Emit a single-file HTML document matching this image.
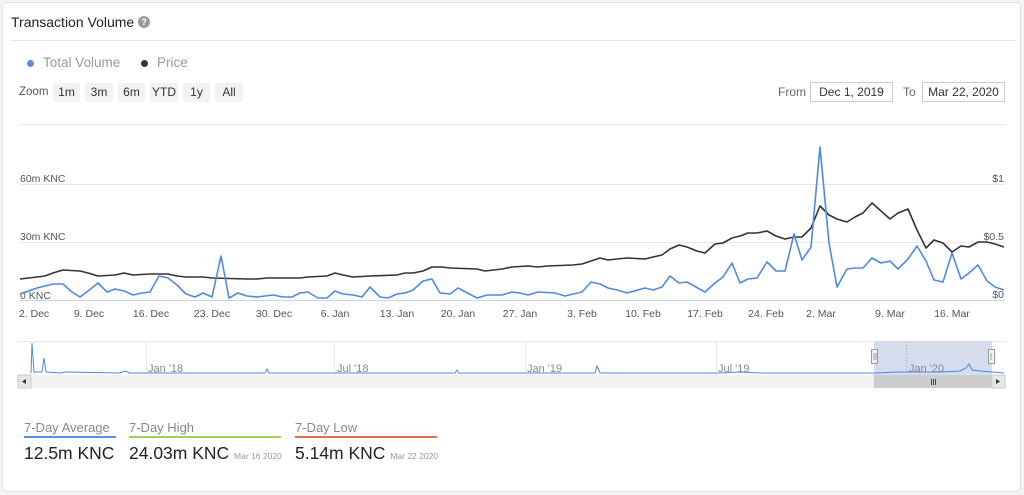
<!DOCTYPE html>
<html><head><meta charset="utf-8"><style>
*{margin:0;padding:0;box-sizing:border-box}
body{width:1024px;height:495px;background:#f4f4f4;font-family:"Liberation Sans",sans-serif;position:relative;overflow:hidden}
.card{position:absolute;left:2px;top:2px;width:1019px;height:490px;background:#fff;border:1px solid #e2e2e2;border-radius:4px}
.abs{position:absolute;white-space:nowrap}
.btn{position:absolute;top:83px;height:19px;background:#f2f2f2;border-radius:2px;font-size:12px;color:#333;text-align:center;line-height:19px}
.inp{position:absolute;top:82px;height:20px;border:1px solid #ccc;font-size:12px;color:#333;text-align:center;line-height:18px;background:#fff}
</style></head><body>
<div class="card"></div>
<div class="abs" style="left:11px;top:14px;font-size:14px;color:#222">Transaction Volume</div>
<div class="abs" style="left:138px;top:16px;width:12px;height:12px;border-radius:6px;background:#9a9a9a;color:#fff;font-size:9px;font-weight:bold;text-align:center;line-height:12px">?</div>
<div class="abs" style="left:10px;top:40px;width:1005px;height:1px;background:#e6e6e6"></div>
<div class="abs" style="left:27px;top:60px;width:7px;height:7px;border-radius:4px;background:#5b8fdd"></div>
<div class="abs" style="left:43px;top:55px;font-size:13.5px;color:#999">Total Volume</div>
<div class="abs" style="left:141px;top:60px;width:7px;height:7px;border-radius:4px;background:#333"></div>
<div class="abs" style="left:157px;top:55px;font-size:13.5px;color:#999">Price</div>
<div class="abs" style="left:19px;top:86px;font-size:11.5px;color:#555">Zoom</div>
<div class="btn" style="left:53px;width:27px">1m</div>
<div class="btn" style="left:85px;width:28px">3m</div>
<div class="btn" style="left:118px;width:27px">6m</div>
<div class="btn" style="left:150px;width:28px">YTD</div>
<div class="btn" style="left:183px;width:27px">1y</div>
<div class="btn" style="left:215px;width:28px">All</div>
<div class="abs" style="left:778px;top:85px;font-size:12px;color:#666">From</div>
<div class="inp" style="left:810px;width:83px">Dec 1, 2019</div>
<div class="abs" style="left:903px;top:85px;font-size:12px;color:#666">To</div>
<div class="inp" style="left:922px;width:83px">Mar 22, 2020</div>
<svg class="abs" style="left:0;top:0" width="1024" height="495">
<g stroke="#e8e8e8" stroke-width="1">
<line x1="20" y1="124.5" x2="1005" y2="124.5"/><line x1="20" y1="184.5" x2="1005" y2="184.5"/><line x1="20" y1="242.5" x2="1005" y2="242.5"/>
</g>
<line x1="20" y1="300.5" x2="1005" y2="300.5" stroke="#c5d6f0"/>
<g font-size="10.5" fill="#555" font-family="Liberation Sans">
<text x="20" y="182">60m KNC</text><text x="20" y="240">30m KNC</text><text x="20" y="299">0 KNC</text>
<text x="1004" y="182" text-anchor="end">$1</text><text x="1004" y="240" text-anchor="end">$0.5</text><text x="1004" y="298" text-anchor="end">$0</text>
</g>
<g font-size="10.5" fill="#555" font-family="Liberation Sans" text-anchor="middle">
<text x="34" y="317">2. Dec</text><text x="89" y="317">9. Dec</text><text x="151" y="317">16. Dec</text><text x="212" y="317">23. Dec</text><text x="274" y="317">30. Dec</text><text x="335" y="317">6. Jan</text><text x="397" y="317">13. Jan</text><text x="458" y="317">20. Jan</text><text x="520" y="317">27. Jan</text><text x="582" y="317">3. Feb</text><text x="643" y="317">10. Feb</text><text x="705" y="317">17. Feb</text><text x="766" y="317">24. Feb</text><text x="821" y="317">2. Mar</text><text x="890" y="317">9. Mar</text><text x="952" y="317">16. Mar</text>
</g>
<polyline fill="none" stroke="#333" stroke-width="1.6" stroke-linejoin="round" points="20,279 37,277 45,276 53,273 63,270 80,271 88,273 98,276 115,275 124,273 133,275 150,274 168,274 177,276 186,277 203,277 212,278 247,279 257,279 267,278 300,278 308,277 327,276 335,273 343,275 353,277 370,276 397,275 405,273 413,273 423,271 432,267 442,267 450,268 477,269 485,271 502,269 512,267 528,266 538,267 547,266 573,265 582,264 591,261 600,258 608,260 617,259 627,258 645,259 653,257 662,255 670,249 679,245 687,247 697,251 705,253 715,244 723,243 732,238 740,236 748,233 757,233 767,231 776,236 785,239 794,237 802,237 811,228 820,206 829,215 837,219 847,222 855,217 863,213 872,203 881,211 890,219 898,213 908,209 917,230 926,248 934,240 943,243 952,252 961,246 969,247 978,242 987,242 995,244 1004,247"/>
<polyline fill="none" stroke="#4f8ae0" stroke-width="1.6" stroke-linejoin="round" points="20,294 37,288 53,284 63,284 72,292 80,297 88,291 98,283 107,292 115,289 124,291 133,295 142,293 150,292 159,276 168,278 177,285 186,294 195,297 203,293 212,297 221,256 229,298 238,293 247,296 257,297 273,295 283,297 292,297 300,293 308,292 318,298 327,298 335,291 343,294 353,295 362,297 370,287 380,297 388,298 397,294 405,293 413,290 423,281 432,279 440,293 450,294 458,288 477,298 487,295 502,295 512,292 520,293 528,295 538,292 555,293 565,296 582,292 591,282 600,284 608,288 617,290 627,293 645,288 653,290 662,287 670,276 679,283 687,282 705,292 715,283 723,277 732,263 740,283 748,279 757,278 767,262 776,271 785,271 794,234 802,260 811,247 820,147 829,243 837,287 847,269 855,268 863,268 872,258 881,263 890,261 898,269 908,259 917,246 926,261 934,280 943,282 952,253 961,279 969,273 978,265 987,281 995,287 1004,290"/>
<line x1="18" y1="341.5" x2="1005" y2="341.5" stroke="#e6e6e6"/>
<rect x="874" y="341" width="118" height="34" fill="#ccd6eb" opacity="0.85"/>
<g stroke="#e6e6e6"><line x1="146.5" y1="342" x2="146.5" y2="375"/><line x1="334.5" y1="342" x2="334.5" y2="375"/><line x1="525.5" y1="342" x2="525.5" y2="375"/><line x1="716.5" y1="342" x2="716.5" y2="375"/></g>
<line x1="906.5" y1="342" x2="906.5" y2="375" stroke="#aab" stroke-dasharray="1,2"/>
<g font-size="11" fill="#888" font-family="Liberation Sans"><text x="148" y="372">Jan '18</text><text x="337" y="372">Jul '18</text><text x="527" y="372">Jan '19</text><text x="718" y="372">Jul '19</text><text x="909" y="372">Jan '20</text></g>
<polyline fill="none" stroke="#4f8ae0" stroke-width="1" points="31,373 32,343 34,372 42,372 44,358 46,372 60,373 65,372 120,373 125,371 130,373 265,373 267,369 269,373 455,373 457,370 459,373 595,373 597,366 600,373 720,373 740,372 760,373 874,373 900,372 940,372 960,371 966,368 969,364 972,370 980,371 992,372 1004,373"/>
<rect x="18" y="375" width="987" height="13" fill="#f2f2f2"/>
<rect x="874" y="375" width="118" height="13" fill="#cdcdcd"/>
<rect x="18" y="375" width="13" height="13" fill="#e6e6e6" stroke="#ccc"/>
<rect x="992" y="375" width="13" height="13" fill="#e6e6e6" stroke="#ccc"/>
<path d="M26,379 L22,381.5 L26,384Z M996,379 L1000,381.5 L996,384Z" fill="#333"/>
<g stroke="#444"><line x1="931.5" y1="379" x2="931.5" y2="385"/><line x1="933.5" y1="379" x2="933.5" y2="385"/><line x1="935.5" y1="379" x2="935.5" y2="385"/></g>
<rect x="871.5" y="349.5" width="6" height="14" fill="#f2f2f2" stroke="#999"/>
<rect x="988.5" y="349.5" width="6" height="14" fill="#f2f2f2" stroke="#999"/>
<g stroke="#999"><line x1="874" y1="353" x2="874" y2="360"/><line x1="876" y1="353" x2="876" y2="360"/><line x1="991" y1="353" x2="991" y2="360"/></g>
</svg>
<div class="abs" style="left:24px;top:420px;font-size:13px;color:#888">7-Day Average</div>
<div class="abs" style="left:24px;top:436px;width:92px;height:2px;background:#5b8fdd"></div>
<div class="abs" style="left:24px;top:443px;font-size:17.5px;color:#222">12.5m KNC</div>
<div class="abs" style="left:129px;top:420px;font-size:13px;color:#888">7-Day High</div>
<div class="abs" style="left:129px;top:436px;width:152px;height:2px;background:#9dd25a"></div>
<div class="abs" style="left:129px;top:443px;font-size:17.5px;color:#222">24.03m KNC <span style="font-size:8.5px;color:#999">Mar 16 2020</span></div>
<div class="abs" style="left:295px;top:420px;font-size:13px;color:#888">7-Day Low</div>
<div class="abs" style="left:295px;top:436px;width:142px;height:2px;background:#d9714f"></div>
<div class="abs" style="left:295px;top:443px;font-size:17.5px;color:#222">5.14m KNC <span style="font-size:8.5px;color:#999">Mar 22 2020</span></div>
</body></html>
